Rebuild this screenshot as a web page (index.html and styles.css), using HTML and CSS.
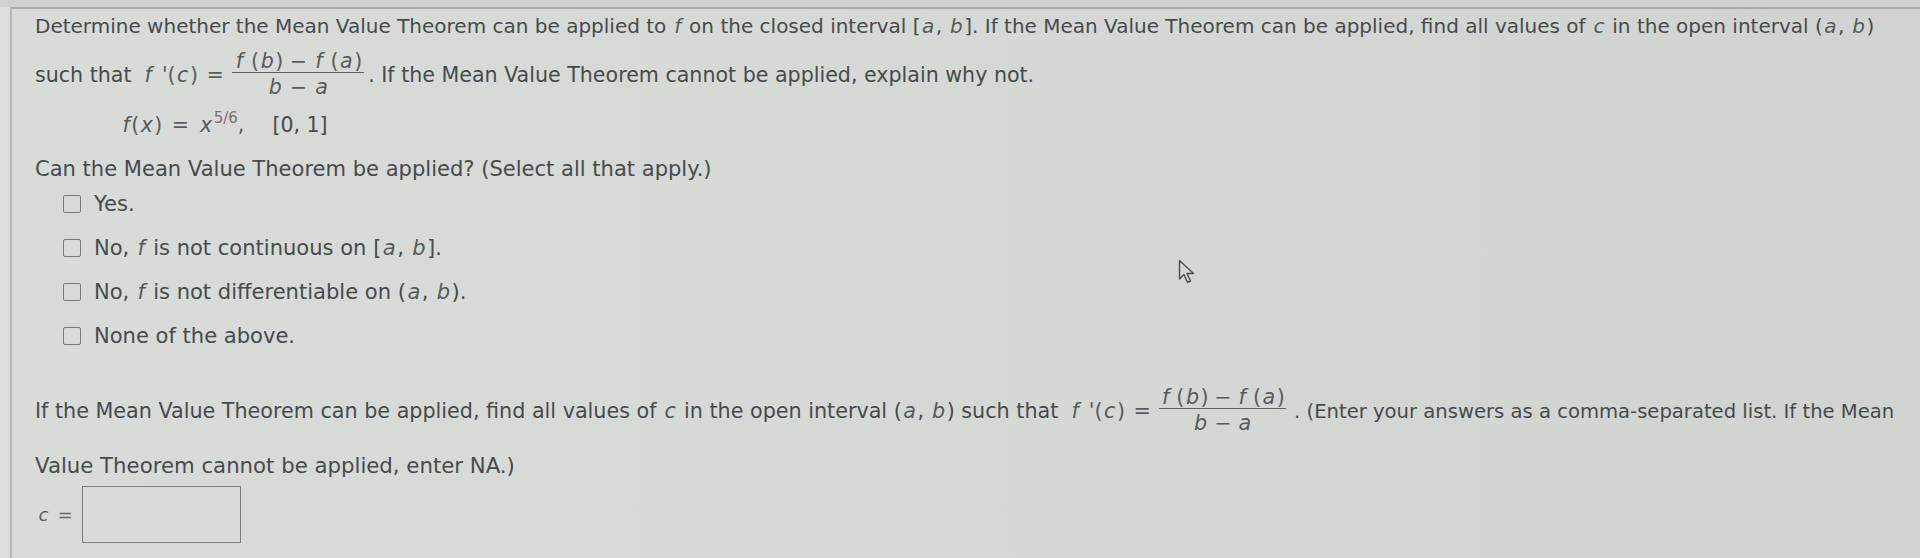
FILE: index.html
```html
<!DOCTYPE html>
<html>
<head>
<meta charset="utf-8">
<link rel="stylesheet" href="styles.css">
</head>
<body>
<div class="screen">
  <div class="panel">
    <p class="para first">Determine whether the Mean Value Theorem can be applied to <i>f</i> on the closed interval [<i>a</i>, <i>b</i>]. If the Mean Value Theorem can be applied, find all values of <i>c</i> in the open interval (<i>a</i>, <i>b</i>)</p>
    <p class="para second">such that <span class="math"><i>f</i> '(<i>c</i>) = <span class="frac"><span class="num"><i>f</i> (<i>b</i>) − <i>f</i> (<i>a</i>)</span><span class="den"><i>b</i> − <i>a</i></span></span></span>. If the Mean Value Theorem cannot be applied, explain why not.</p>
    <div class="func"><span class="math"><i>f</i>(<i>x</i>) = <i>x</i><sup>5/6</sup>,</span><span class="interval">[0, 1]</span></div>
    <p class="para ask">Can the Mean Value Theorem be applied? (Select all that apply.)</p>
    <ul class="options">
      <li><span class="check"></span><span>Yes.</span></li>
      <li><span class="check"></span><span>No, <i>f</i> is not continuous on [<i>a</i>, <i>b</i>].</span></li>
      <li><span class="check"></span><span>No, <i>f</i> is not differentiable on (<i>a</i>, <i>b</i>).</span></li>
      <li><span class="check"></span><span>None of the above.</span></li>
    </ul>
    <p class="para q2">If the Mean Value Theorem can be applied, find all values of <i>c</i> in the open interval (<i>a</i>, <i>b</i>) such that <span class="math"><i>f</i> '(<i>c</i>) = <span class="frac"><span class="num"><i>f</i> (<i>b</i>) − <i>f</i> (<i>a</i>)</span><span class="den"><i>b</i> − <i>a</i></span></span></span><span class="tail"> . (Enter your answers as a comma-separated list. If the Mean</span></p>
    <p class="para q2b">Value Theorem cannot be applied, enter NA.)</p>
    <div class="answer"><span class="math small"><i>c</i> =</span><span class="box"></span></div>
    <svg class="cursor" width="18" height="26" viewBox="0 0 18 26"><path d="M1.5 1.5 L1.5 20 L6 15.5 L9.5 23.5 L12.5 22 L9 14.5 L15.5 14.5 Z" fill="none" stroke="#4a4e4f" stroke-width="1.4" stroke-linejoin="round"/></svg>
  </div>
</div>
</body>
</html>
```

FILE: styles.css
```css
html, body {
  margin: 0;
  padding: 0;
  width: 1920px;
  height: 558px;
  overflow: hidden;
  background: #d6d9d6;
}
.screen {
  height: 558px;
  padding: 7px 0 0 10px;
  box-sizing: border-box;
  background: linear-gradient(180deg, #cfd2cf 0px, #cfd2cf 7px, #dcdedb 7px);
}
.panel {
  position: relative;
  height: 100%;
  border-top: 2px solid #a9acaa;
  border-left: 2px solid #b3b6b3;
  padding: 0 0 0 23px;
  box-sizing: border-box;
  font-family: "DejaVu Sans", Verdana, sans-serif;
  font-size: 20px;
  color: #464b4d;
  background: linear-gradient(90deg, #d9dbd8 0%, #d5d8d5 50%, #d1d3d0 100%);
}
i {
  font-style: italic;
  color: #565a5c;
  padding: 0 1.5px;
}
.para {
  margin: 0;
  white-space: nowrap;
}
.first {
  padding-top: 3px;
  line-height: 28px;
}
.second {
  margin-top: 9px;
  line-height: 52px;
  font-size: 20.6px;
}
.math {
  margin-left: 5px;
  color: #585c5e;
  word-spacing: 2px;
}
.frac {
  display: inline-flex;
  flex-direction: column;
  align-items: center;
  vertical-align: 14px;
  margin-right: 4px;
  word-spacing: 0;
}
.num {
  line-height: 20px;
  border-bottom: 1.5px solid #5c6062;
  padding: 0 2px 1px;
}
.den {
  line-height: 22px;
  padding-top: 3px;
}
.q2 .frac {
  word-spacing: -1px;
  margin-right: 2px;
}
.q2 .num {
  padding: 0 1px 1px;
}
.func {
  margin-top: 9px;
  padding-left: 86px;
  display: flex;
  gap: 28px;
  line-height: 30px;
  white-space: nowrap;
  font-size: 20.5px;
}
.func .math {
  margin-left: 0;
  word-spacing: 3px;
}
.func sup {
  font-size: 15px;
  vertical-align: 9px;
  line-height: 0;
  color: #7e6f74;
}
.interval {
  color: #464b4d;
}
.ask {
  margin-top: 15px;
  line-height: 28px;
  font-size: 21.05px;
}
.options {
  list-style: none;
  margin: 9px 0 0 0;
  padding: 0 0 0 28px;
  display: flex;
  flex-direction: column;
  gap: 20px;
  font-size: 21.05px;
}
.options li {
  display: flex;
  align-items: center;
  line-height: 24px;
  white-space: nowrap;
}
.check {
  flex: none;
  width: 16px;
  height: 16px;
  border: 1.5px solid #777b7c;
  border-radius: 2px;
  margin-right: 13px;
  background: #d8dad7;
}
.q2 {
  margin-top: 37px;
  line-height: 52px;
  font-size: 20.7px;
}
.tail {
  font-size: 19.6px;
}
.q2b {
  margin-top: 14px;
  line-height: 28px;
  font-size: 21.25px;
}
.answer {
  display: flex;
  align-items: center;
  margin-top: 6px;
  gap: 9px;
}
.answer .math {
  margin-left: 2px;
}
.small {
  font-size: 18px;
  color: #686c6e;
}
.box {
  width: 157px;
  height: 55px;
  border: 1.5px solid #7a7e7f;
  background: #d9dbd8;
}
.cursor {
  position: absolute;
  left: 1166px;
  top: 250px;
}
```
